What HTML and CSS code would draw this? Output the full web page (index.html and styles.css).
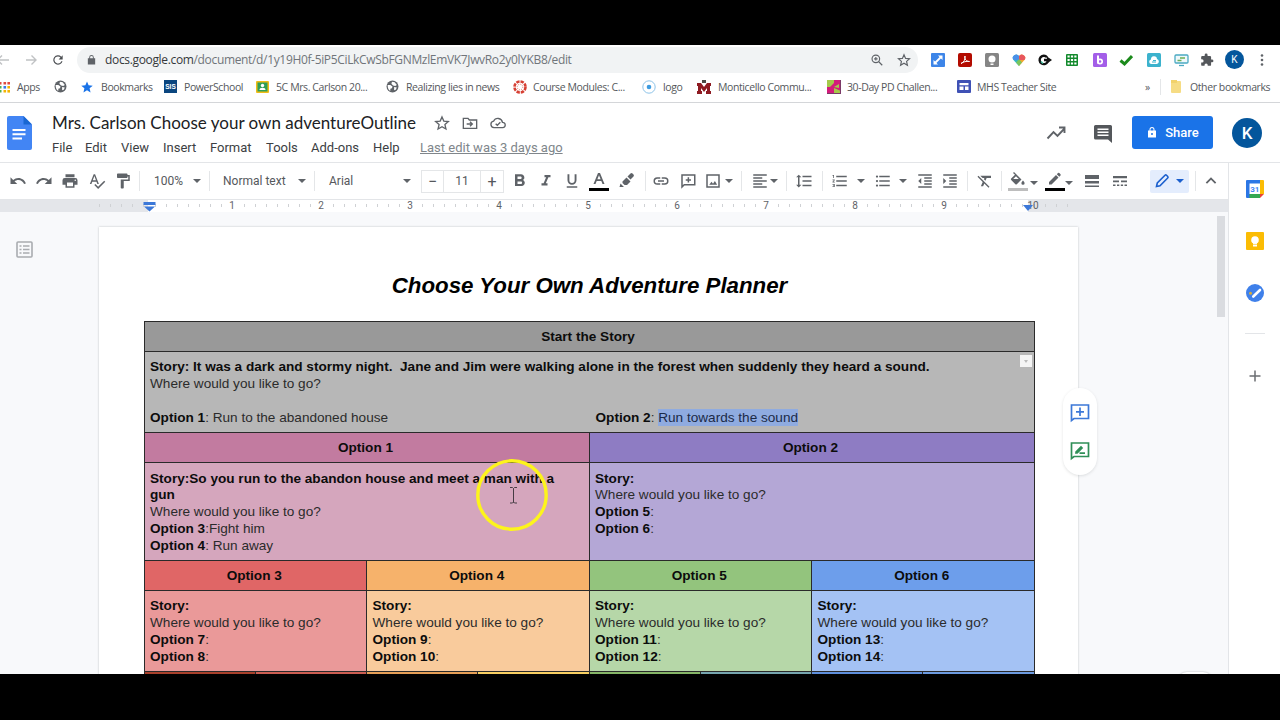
FILE: index.html
```
<!DOCTYPE html>
<html lang="en">
<head>
  <meta charset="UTF-8">
  <meta name="viewport" content="width=device-width, initial-scale=1.0">
  <title>Mrs. Carlson Choose your own adventureOutline</title>
  <link rel="stylesheet" href="styles.css">
</head>
<body>

<svg class="defs" width="0" height="0">
  <symbol id="caret" viewBox="0 0 8 4"><path d="M0 0h8L4 4z"/></symbol>
  <symbol id="globe" viewBox="0 0 24 24"><circle cx="12" cy="12" r="11"/><path fill="#fff" d="M3 9l5 0 4 3-1 3-3 1 0 4C5 19 3 15 3 9zM11 3l5 1 4 5-3 2-4-1-3-3zM15 13l5 1-2 4-3 1z"/></symbol>
</svg>

<div class="screen">
  <!-- Browser -->
  <div class="urlbar">
    <svg width="10" height="14" viewBox="0 0 10 14" fill="none" stroke="#c0c2c4" stroke-width="1.4"><path d="M0 7h9M2 2.500L-2.500 7 2 11.500"/></svg>
    <svg width="14" height="14" viewBox="0 0 14 14" fill="none" stroke="#c0c2c4" stroke-width="1.4"><path d="M2 7h10M7.500 2.500L12 7l-4.500 4.500"/></svg>
    <svg width="14" height="14" viewBox="0 0 24 24" fill="#4a4d51"><path d="M17.650 6.350A8 8 0 1 0 19.730 14h-2.080A6 6 0 1 1 12 6c1.660 0 3.140.690 4.220 1.780L13 11h7V4z"/></svg>
    <div class="omnibox">
      <svg width="11" height="12" viewBox="0 0 24 24" fill="#5f6368"><path d="M18 8h-1V6A5 5 0 0 0 7 6v2H4v14h16V8zM9 6a3 3 0 0 1 6 0v2H9z"/></svg>
      <span class="url"><b>docs.google.com</b>/document/d/1y19H0f-5iP5CiLkCwSbFGNMzlEmVK7JwvRo2y0lYKB8/edit</span>
      <svg class="zoom" width="14" height="14" viewBox="0 0 24 24" fill="none" stroke="#5f6368" stroke-width="2"><circle cx="10" cy="10" r="6.500"/><path d="M15 15l6 6M7 10h6M10 7v6"/></svg>
      <svg width="14" height="14" viewBox="0 0 24 24" fill="none" stroke="#5f6368" stroke-width="2"><path d="M12 3l2.700 6.200 6.800.6-5.100 4.500 1.500 6.700-5.900-3.500L6.100 21l1.500-6.700-5.100-4.500 6.800-.6z"/></svg>
    </div>
    <svg width="14" height="14" viewBox="0 0 14 14"><rect width="14" height="14" rx="1" fill="#3d85e8"/><path d="M3.500 10.500l7-7" stroke="#fff" stroke-width="1.800"/><path d="M7 2.500h4.500V7zM2.500 7v4.500H7z" fill="#fff"/></svg>
    <svg width="14" height="14" viewBox="0 0 14 14"><rect width="14" height="14" rx="2" fill="#b30b00"/><path d="M3 10.500c3-1 4.500-4.500 4-7.500-1 3 1.500 5.500 4.500 5.500C8 8 5.500 8.800 3 10.500z" fill="none" stroke="#fff"/></svg>
    <svg width="14" height="14" viewBox="0 0 14 14"><rect width="14" height="14" rx="1.500" fill="#858585"/><circle cx="7" cy="6" r="3.500" fill="#fff"/><path d="M5.500 10.500h3v1.500h-3z" fill="#fff"/></svg>
    <svg width="14" height="14" viewBox="0 0 14 14"><path d="M7 13L1.500 7A3.300 3.300 0 0 1 7 3z" fill="#35b6c6"/><path d="M7 13l5.500-6A3.300 3.300 0 0 0 7 3z" fill="#f3a52f"/><path d="M1.500 7A3.300 3.300 0 0 1 7 3v4z" fill="#4a90e8"/><path d="M7 3a3.300 3.300 0 0 1 5.500 4L7 7z" fill="#e8565d"/><path d="M4 9.500L7 6l3 3.500L7 13z" fill="#7cc55c"/></svg>
    <svg width="15" height="14" viewBox="0 0 15 14"><path d="M9 4.200A4.200 4.200 0 1 0 9.500 9V7H6" fill="none" stroke="#111" stroke-width="2.400"/><path d="M9 3.500L14 7l-5 3.500z" fill="#111"/><path d="M3 8.500l2 2" stroke="#49c7a5" stroke-width="1.500"/></svg>
    <svg width="14" height="14" viewBox="0 0 14 14"><rect x="1" y="1" width="12" height="12" rx="1" fill="#138a2d"/><path d="M2.500 3.500h9M2.500 7h9M2.500 10.500h9" stroke="#fff" stroke-width="2" stroke-dasharray="2.200 1.200"/></svg>
    <svg width="14" height="14" viewBox="0 0 14 14"><rect width="14" height="14" rx="1.500" fill="#a35ee8"/><path d="M5 2.500v8" stroke="#fff" stroke-width="2"/><circle cx="7" cy="8.500" r="2.200" fill="none" stroke="#fff" stroke-width="1.700"/></svg>
    <svg width="14" height="14" viewBox="0 0 14 14"><path d="M1.500 7.500l4 3.500L13 3" fill="none" stroke="#1b8a1b" stroke-width="3"/></svg>
    <svg width="14" height="14" viewBox="0 0 14 14"><rect width="14" height="14" rx="1.500" fill="#3cb2cd"/><path d="M4 11a2.300 2.300 0 0 1 0-4.500 3 3 0 0 1 6-.5 2.600 2.600 0 0 1 0 5z" fill="#fff"/><path d="M5 9h4M6 7.500h3" stroke="#3cb2cd"/></svg>
    <svg width="15" height="14" viewBox="0 0 15 14"><rect x="1" y="2" width="13" height="8" rx="1" fill="#eef8fb" stroke="#4aa9c2" stroke-width="1.300"/><path d="M3.500 7.500h4M6 5h5" stroke="#6cae56" stroke-width="1.300"/><path d="M5 12.500h5" stroke="#4aa9c2" stroke-width="1.300"/></svg>
    <svg width="14" height="14" viewBox="0 0 24 24" fill="#54575b"><path d="M20.500 11H19V7a2 2 0 0 0-2-2h-4V3.500a2.500 2.500 0 0 0-5 0V5H4a2 2 0 0 0-2 2v3.800h1.500a2.700 2.700 0 0 1 0 5.400H2V20a2 2 0 0 0 2 2h3.800v-1.500a2.700 2.700 0 0 1 5.400 0V22H17a2 2 0 0 0 2-2v-4h1.500a2.500 2.500 0 0 0 0-5z"/></svg>
    <span class="avatar avatar-small">K</span>
    <svg width="14" height="14" viewBox="0 0 14 14" fill="#5f6368"><circle cx="7" cy="2.500" r="1.300"/><circle cx="7" cy="7" r="1.300"/><circle cx="7" cy="11.500" r="1.300"/></svg>
  </div>

  <div class="bookmarks">
    <svg width="10" height="12" viewBox="0 0 10 12"><g fill="#e04a3f"><path d="M0 1h1.500v2.600H0zM3.500 1h2.600v2.600H3.500zM7.400 1H10v2.600H7.400z"/></g><path fill="#4caf50" d="M0 5h1.500v2.600H0z"/><path fill="#3b78e7" d="M3.500 5h2.600v2.600H3.500z"/><path fill="#f4b400" d="M7.400 5H10v2.600H7.400zM3.500 9h2.600v2.600H3.500z"/><path fill="#4caf50" d="M0 9h1.500v2.600H0z"/><path fill="#f4b400" d="M7.400 9H10v2.600H7.400z"/></svg>
    <span>Apps</span>
    <svg width="13" height="13" fill="#5f6368"><use href="#globe"/></svg>
    <svg width="12" height="12" viewBox="0 0 24 24" fill="#1a73e8"><path d="M12 1l3.200 7.600 8.300.7-6.300 5.400 1.900 8.100L12 18.500l-7.100 4.300 1.900-8.100L.5 9.300l8.300-.7z"/></svg>
    <span>Bookmarks</span>
    <span class="sis">SIS</span>
    <span>PowerSchool</span>
    <svg width="13" height="12" viewBox="0 0 13 12"><rect width="13" height="12" rx="1" fill="#f0bd18"/><rect x="1.500" y="1.500" width="10" height="9" fill="#2f9e56"/><circle cx="6.500" cy="4.500" r="1.700" fill="#fff"/><path d="M3.500 9a3 2.300 0 0 1 6 0z" fill="#fff"/></svg>
    <span>5C Mrs. Carlson 20...</span>
    <svg width="13" height="13" fill="#5f6368"><use href="#globe"/></svg>
    <span>Realizing lies in news</span>
    <svg width="14" height="14" viewBox="0 0 14 14" fill="none" stroke="#d64034"><circle cx="7" cy="7" r="5.500" stroke-width="2.600" stroke-dasharray="3.300 1"/><circle cx="7" cy="7" r="2.800" stroke-width=".7" stroke-dasharray="1 1.200"/></svg>
    <span>Course Modules: C...</span>
    <svg width="14" height="14" viewBox="0 0 14 14"><circle cx="7" cy="7" r="6.200" fill="none" stroke="#8cc3e8"/><circle cx="7" cy="7" r="2.300" fill="#3c9be0"/></svg>
    <span>logo</span>
    <svg width="14" height="14" viewBox="0 0 14 14"><path d="M0 3h4l3 4 3-4h4v3h-1v5h1v3H9v-3h1V8l-3 4-3-4v3h1v3H0v-3h1V6H0z" fill="#8e1b22"/><path d="M5 0h4v3H5z" fill="#4b4a45"/></svg>
    <span>Monticello Commu...</span>
    <svg width="14" height="14" viewBox="0 0 14 14"><rect width="14" height="14" fill="#d31b7b"/><path d="M0 0h7v3L3 7H0zM7 14V8l7 3v3zM7 7l5-3v4z" fill="#a5c94a"/><path d="M0 13.500h14M13.500 0v14" stroke="#7b3a68"/></svg>
    <span>30-Day PD Challen...</span>
    <svg width="14" height="13" viewBox="0 0 14 13"><rect width="14" height="13" rx="1" fill="#3f51b5"/><path d="M2.500 3h9v2.200h-9zM2.500 6.500h4V10h-4zM8 6.500h3.500V10H8z" fill="#fff"/></svg>
    <span>MHS Teacher Site</span>
    <span class="more">»</span>
    <i class="sep"></i>
    <svg width="12" height="13" viewBox="0 0 12 13"><rect x="1" y="1" width="10" height="12" rx="1" fill="#f6dc84"/><path d="M1 0h6v3H1z" fill="#f2d26b"/></svg>
    <span>Other bookmarks</span>
  </div>

  <!-- Docs header -->
  <div class="header">
    <svg class="logo" width="25" height="34" viewBox="0 0 25 34"><path d="M2 0h14.500L25 8.500V32a2 2 0 0 1-2 2H2a2 2 0 0 1-2-2V2a2 2 0 0 1 2-2z" fill="#4285f4"/><path d="M16.500 0L25 8.500h-8.500z" fill="#1967d2"/><path d="M5.500 14h13M5.500 18.200h13M5.500 22.500h9.500" stroke="#fff" stroke-width="1.900"/></svg>
    <div class="doc">
      <div class="titlerow">
        <span class="title">Mrs. Carlson Choose your own adventureOutline</span>
        <svg width="16" height="16" viewBox="0 0 24 24" fill="none" stroke="#5f6368" stroke-width="2"><path d="M12 3l2.700 6.200 6.800.6-5.100 4.500 1.500 6.700-5.900-3.500L6.100 21l1.500-6.700-5.100-4.500 6.800-.6z"/></svg>
        <svg width="16" height="16" viewBox="0 0 24 24" fill="none" stroke="#5f6368" stroke-width="2"><path d="M2 5h7l2 2.500h11V20H2zM7 13.500h8M12 10l3.500 3.500L12 17"/></svg>
        <svg width="16" height="16" viewBox="0 0 24 24" fill="none" stroke="#5f6368" stroke-width="2"><path d="M6 19a5 5 0 0 1-.5-9.900A7 7 0 0 1 18.700 11 4 4 0 0 1 19 19zM8.500 13l2.500 2.500 4.500-4.500"/></svg>
      </div>
      <div class="menus">
        <span>File</span><span>Edit</span><span>View</span><span>Insert</span><span>Format</span><span>Tools</span><span>Add-ons</span><span>Help</span><span class="last">Last edit was 3 days ago</span>
      </div>
    </div>
    <svg width="20" height="20" viewBox="0 0 20 20" fill="none" stroke="#5f6368" stroke-width="1.900"><path d="M1.500 15.500l6-6.500 4 4 7-7.500M13 4.500h5.500V10"/></svg>
    <svg class="history" width="18" height="18" viewBox="0 0 18 18"><path d="M1.500 0h15A1.500 1.500 0 0 1 18 1.500V18l-4-3.500H1.500A1.500 1.500 0 0 1 0 13V1.500A1.500 1.500 0 0 1 1.500 0z" fill="#54575b"/><path d="M3.500 4.300h11M3.500 7.300h11M3.500 10.300h11" stroke="#fff" stroke-width="1.500"/></svg>
    <div class="share">
      <svg width="12" height="13" viewBox="0 0 24 24" fill="#fff"><path d="M18 8h-1V6A5 5 0 0 0 7 6v2H4v14h16V8zM9 6a3 3 0 0 1 6 0v2H9zm3 11a2 2 0 1 1 0-4 2 2 0 0 1 0 4z" fill-rule="evenodd"/></svg>
      <span>Share</span>
    </div>
    <span class="avatar avatar-big">K</span>
  </div>

  <div class="workspace">
    <div class="editor">
      <div class="toolbar">
        <svg width="18" height="18" viewBox="0 0 24 24"><path d="M12.500 8c-2.650 0-5.050 1-6.900 2.600L2 7v9h9l-3.620-3.620c1.390-1.160 3.160-1.880 5.120-1.880 3.540 0 6.550 2.310 7.600 5.500l2.370-.780C21.080 11.030 17.150 8 12.500 8z"/></svg>
        <svg width="18" height="18" viewBox="0 0 24 24"><path d="M18.400 10.600C16.550 9 14.150 8 11.500 8c-4.650 0-8.580 3.030-9.960 7.220L3.900 16c1.050-3.190 4.050-5.500 7.600-5.500 1.950 0 3.730.720 5.120 1.880L13 16h9V7z"/></svg>
        <svg width="18" height="18" viewBox="0 0 24 24"><path fill-rule="evenodd" d="M19 8H5a3 3 0 0 0-3 3v6h4v4h12v-4h4v-6a3 3 0 0 0-3-3zm-3 11H8v-5h8zm3-7a1 1 0 1 1 0-2 1 1 0 0 1 0 2zM18 3H6v4h12z"/></svg>
        <svg width="18" height="18" viewBox="0 0 24 24"><path d="M12.450 16h2.090L9.430 3H7.570L2.460 16h2.090l1.120-3h5.640zm-6.020-5L8.500 5.480 10.570 11zm15.160.590l-8.090 8.090L9.830 16l-1.410 1.410 5.090 5.090L23 13z"/></svg>
        <svg width="18" height="18" viewBox="0 0 24 24"><path d="M18 4V3c0-.550-.450-1-1-1H5c-.550 0-1 .450-1 1v4c0 .550.450 1 1 1h12c.550 0 1-.450 1-1V6h1v4H9v11c0 .550.450 1 1 1h2c.550 0 1-.450 1-1v-9h8V4z"/></svg>
        <i class="sep"></i>
        <span>100%</span>
        <svg width="8" height="4"><use href="#caret"/></svg>
        <i class="sep"></i>
        <span>Normal text</span>
        <svg width="8" height="4"><use href="#caret"/></svg>
        <i class="sep"></i>
        <span>Arial</span>
        <svg width="8" height="4"><use href="#caret"/></svg>
        <div class="fontsize"><span>−</span><b>11</b><span>+</span></div>
        <svg width="20" height="20" viewBox="0 0 24 24"><path d="M15.600 10.790c.970-.670 1.650-1.770 1.650-2.790 0-2.260-1.750-4-4-4H6v14h8.040c2.090 0 3.710-1.700 3.710-3.790 0-1.520-.860-2.820-2.150-3.420zM9 6.500h3.500c.830 0 1.500.670 1.500 1.500s-.670 1.500-1.500 1.500H9v-3zm4 9H9v-3h4c.830 0 1.500.670 1.500 1.500s-.670 1.500-1.500 1.500z" fill-rule="evenodd"/></svg>
        <svg width="18" height="18" viewBox="0 0 24 24"><path d="M10 4v3h2.210l-3.420 8H6v3h8v-3h-2.210l3.420-8H18V4z"/></svg>
        <svg width="18" height="18" viewBox="0 0 24 24"><path d="M12 17c3.310 0 6-2.690 6-6V3h-2.500v8a3.500 3.500 0 0 1-7 0V3H6v8c0 3.310 2.690 6 6 6zm-7 2v2h14v-2z"/></svg>
        <svg class="color" width="20" height="20" viewBox="0 0 20 20"><path d="M9 2h2l4.500 11h-2l-1.200-3H7.700l-1.200 3h-2zM8.400 8.300h3.200L10 4.200z" fill-rule="evenodd"/><path d="M0 17h20v3H0z" fill="#000"/></svg>
        <svg width="18" height="18" viewBox="0 0 18 18"><path d="M2.500 11.500l3.500 3.500H1.500zM4.500 9.500l4-4 4 4-3.500 3.500H6.500l-2-2zM9.500 4.500l3-3a1.500 1.500 0 0 1 2 0l1 1a1.500 1.500 0 0 1 0 2l-3 3z"/></svg>
        <i class="sep"></i>
        <svg width="18" height="18" viewBox="0 0 24 24"><path d="M3.900 12c0-1.710 1.390-3.100 3.100-3.100h4V7H7a5 5 0 0 0 0 10h4v-1.900H7c-1.710 0-3.100-1.390-3.100-3.100zM8 13h8v-2H8zm9-6h-4v1.900h4a3.100 3.100 0 0 1 0 6.200h-4V17h4a5 5 0 0 0 0-10z"/></svg>
        <svg width="18" height="18" viewBox="0 0 24 24" fill="none" stroke="#5f6368" stroke-width="2"><path d="M4 20V4h17v13H7zM12.500 7v7M9 10.500h7"/></svg>
        <svg width="18" height="18" viewBox="0 0 24 24"><path fill="none" stroke="#5f6368" stroke-width="2" d="M4 4h16v16H4z"/><path d="M7 17l3-4 2 2.500 2.500-3.500L17.500 17z"/></svg>
        <svg width="8" height="4"><use href="#caret"/></svg>
        <i class="sep"></i>
        <svg width="18" height="18" viewBox="0 0 24 24"><path d="M15 15H3v2h12zm0-8H3v2h12zM3 13h18v-2H3zm0 8h18v-2H3zM3 3v2h18V3z"/></svg>
        <svg width="8" height="4"><use href="#caret"/></svg>
        <i class="sep"></i>
        <svg width="18" height="18" viewBox="0 0 24 24"><path d="M6 7h2.500L5 3.500 1.500 7H4v10H1.500L5 20.500 8.500 17H6zm4-2v2h12V5zm0 14h12v-2H10zm0-6h12v-2H10z"/></svg>
        <i class="sep"></i>
        <svg width="18" height="18" viewBox="0 0 24 24"><path d="M2 17h2v.5H3v1h1v.5H2v1h3v-4H2zm1-9h1V4H2v1h1zm-1 3h1.800L2 13.100v.9h3v-1H3.200L5 10.900V10H2zm5-6v2h14V5zm0 14h14v-2H7zm0-6h14v-2H7z"/></svg>
        <svg width="8" height="4"><use href="#caret"/></svg>
        <svg width="18" height="18" viewBox="0 0 24 24"><path d="M4 10.500a1.500 1.500 0 1 0 0 3 1.500 1.500 0 0 0 0-3zm0-6a1.500 1.500 0 1 0 0 3 1.500 1.500 0 0 0 0-3zm0 12a1.500 1.500 0 1 0 0 3 1.500 1.500 0 0 0 0-3zM7 19h14v-2H7zm0-6h14v-2H7zm0-8v2h14V5z"/></svg>
        <svg width="8" height="4"><use href="#caret"/></svg>
        <svg width="18" height="18" viewBox="0 0 24 24"><path d="M11 17h10v-2H11zm-8-5l4 4V8zm0 9h18v-2H3zM3 3v2h18V3zm8 6h10V7H11zm0 4h10v-2H11z"/></svg>
        <svg width="18" height="18" viewBox="0 0 24 24"><path d="M3 21h18v-2H3zM3 8v8l4-4zm8 9h10v-2H11zM3 3v2h18V3zm8 6h10V7H11zm0 4h10v-2H11z"/></svg>
        <i class="sep"></i>
        <svg width="18" height="18" viewBox="0 0 24 24"><path d="M3.270 5L2 6.270l6.970 6.970L6.500 19h3l1.570-3.660L16.730 21 18 19.730 3.550 5.270zM6 5v.180L8.820 8h2.400l-.720 1.680 2.100 2.100L14.210 8H20V5z"/></svg>
        <i class="sep"></i>
        <svg class="color" width="20" height="20" viewBox="0 0 20 20"><path d="M6 1l7.500 7.500-4.700 4.700a1 1 0 0 1-1.400 0L3.200 9a1 1 0 0 1 0-1.400L7 3.800 5 1.900zM8 5.200L5.200 8h5.600z" fill-rule="evenodd"/><path d="M15 9.500s1.600 1.700 1.600 2.700a1.600 1.600 0 0 1-3.200 0c0-1 1.600-2.700 1.600-2.700z"/><path d="M0 17h20v3H0z" fill="#bdbdbd"/></svg>
        <svg width="8" height="4" class="low"><use href="#caret"/></svg>
        <svg class="color" width="20" height="20" viewBox="0 0 20 20"><path d="M4 11l7-7 2.500 2.500-7 7H4zM11.800 3.200l1.200-1.200a1 1 0 0 1 1.300 0l1.200 1.200a1 1 0 0 1 0 1.300l-1.200 1.200z"/><path d="M0 17h20v3H0z" fill="#000"/></svg>
        <svg width="8" height="4" class="low"><use href="#caret"/></svg>
        <svg width="18" height="18" viewBox="0 0 18 18"><path d="M2 3h14v4H2zM2 9h14v2.500H2zM2 13.500h14V15H2z"/></svg>
        <svg width="18" height="18" viewBox="0 0 18 18"><path d="M2 4h14v2.300H2zM2 8.500h6v1.700H2zM10 8.500h6v1.700h-6zM2 12.500h2.500V14H2zM6 12.500h2.300V14H6zM9.800 12.500h2.300V14H9.800zM13.500 12.500H16V14h-2.500z"/></svg>
        <div class="mode">
          <svg width="16" height="16" viewBox="0 0 16 16" fill="none" stroke="#1a5fce" stroke-width="1.600"><path d="M2.500 13.500l.8-3.500L11 2.300c.5-.5 1-.5 1.500 0l1.200 1.200c.5.500.5 1 0 1.500L6 12.700z"/></svg>
          <svg width="8" height="4"><use href="#caret"/></svg>
        </div>
        <i class="sep"></i>
        <svg width="18" height="18" viewBox="0 0 24 24"><path d="M12 7l-7 7 1.700 1.700L12 10.400l5.300 5.300L19 14z"/></svg>
      </div>

      <div class="ruler">
        <div class="inch first"><svg width="13" height="11" viewBox="0 0 13 11" fill="#3c78d8"><path d="M.5 1h12v3H.5zM1 5.500h11L6.500 10.500z"/></svg></div>
        <div class="inch"><span>1</span></div><div class="inch"><span>2</span></div><div class="inch"><span>3</span></div><div class="inch"><span>4</span></div><div class="inch"><span>5</span></div><div class="inch"><span>6</span></div><div class="inch"><span>7</span></div><div class="inch"><span>8</span></div><div class="inch"><span>9</span></div>
        <div class="inch final"><span>10</span><svg width="10" height="6" viewBox="0 0 10 6" fill="#3c78d8"><path d="M0 0h10L5 6z"/></svg></div>
      </div>

      <div class="canvas">
        <svg class="outline" width="17" height="17" viewBox="0 0 17 17" fill="none" stroke="#a9acb0" stroke-width="1.600"><rect x="1" y="1" width="15" height="15" rx="1"/><path d="M3.500 5h2M7 5h6.500M3.500 8.500h2M7 8.500h6.500M3.500 12h2M7 12h6.500" stroke-width="1.400"/></svg>
        <div class="page">
          <h1>Choose Your Own Adventure Planner</h1>
          <div class="planner">
            <div class="cell w8 head c-gray">Start the Story</div>
            <div class="cell w8 start c-gray-l">
              <b>Story: It was a dark and stormy night.&nbsp; Jane and Jim were walking alone in the forest when suddenly they heard a sound.</b><br>
              Where would you like to go?<br><br>
              <div class="choices"><span><b>Option 1</b>: Run to the abandoned house</span><span><b>Option 2</b>: <mark>Run towards the sound</mark></span></div>
              <i class="cellmenu"></i>
            </div>

            <div class="cell w4 head c-pink">Option 1</div>
            <div class="cell w4 head c-purple">Option 2</div>
            <div class="cell w4 tall c-pink-l"><b>Story:So you run to the abandon house and meet a man with a<br>gun</b><br>Where would you like to go?<br><b>Option 3</b>:Fight him<br><b>Option 4</b>: Run away</div>
            <div class="cell w4 tall c-purple-l"><b>Story:</b><br>Where would you like to go?<br><b>Option 5</b>:<br><b>Option 6</b>:</div>

            <div class="cell w2 head c-red">Option 3</div>
            <div class="cell w2 head c-orange">Option 4</div>
            <div class="cell w2 head c-green">Option 5</div>
            <div class="cell w2 head c-blue">Option 6</div>
            <div class="cell w2 c-red-l"><b>Story:</b><br>Where would you like to go?<br><b>Option 7</b>:<br><b>Option 8</b>:</div>
            <div class="cell w2 c-orange-l"><b>Story:</b><br>Where would you like to go?<br><b>Option 9</b>:<br><b>Option 10</b>:</div>
            <div class="cell w2 c-green-l"><b>Story:</b><br>Where would you like to go?<br><b>Option 11</b>:<br><b>Option 12</b>:</div>
            <div class="cell w2 c-blue-l"><b>Story:</b><br>Where would you like to go?<br><b>Option 13</b>:<br><b>Option 14</b>:</div>

            <div class="cell c-n1"></div><div class="cell c-n2"></div><div class="cell c-n3"></div><div class="cell c-n4"></div>
            <div class="cell c-n5"></div><div class="cell c-n6"></div><div class="cell c-n7"></div><div class="cell c-n8"></div>
          </div>
        </div>
        <div class="scrollbar"></div>
        <div class="float">
          <svg width="20" height="20" viewBox="0 0 20 20" fill="none" stroke="#3c78d8" stroke-width="1.700"><path d="M1.500 17.500V2h17v13.500H4zM10 4.500v8.500M6 8.800h8"/></svg>
          <svg width="20" height="20" viewBox="0 0 20 20" fill="none" stroke="#2f8f57" stroke-width="1.700"><path d="M1.500 17.500V2h17v13.500H4zM9.500 12.200H15"/><path d="M5 12.700l.3-2.200L11 4.800l2.200 2.200-5.700 5.700z" fill="#2f8f57" stroke="none"/></svg>
        </div>
        <div class="explore"></div>
      </div>
    </div>

    <div class="sidepanel">
      <svg width="18" height="18" viewBox="0 0 18 18"><path d="M1 0h13v4H4v14H1a1 1 0 0 1-1-1V1a1 1 0 0 1 1-1z" fill="#2b76e5"/><path d="M14 0h3a1 1 0 0 1 1 1v13h-4z" fill="#fbbc04"/><path d="M3.500 14H14v4H3.500z" fill="#34a853"/><path d="M14 14h4l-4 4z" fill="#ea4335"/><path d="M3.500 3.500H14V14H3.500z" fill="#fff"/><text x="8.800" y="11.700" font-size="8" font-weight="bold" text-anchor="middle" fill="#4285f4">31</text></svg>
      <svg width="18" height="18" viewBox="0 0 18 18"><rect width="18" height="18" rx="1" fill="#fbbc04"/><circle cx="9" cy="8" r="3.800" fill="#fff"/><path d="M7 11h4v3.500H7z" fill="#fff"/><path d="M7 12.400h4" stroke="#fbbc04" stroke-width=".6"/></svg>
      <svg width="18" height="18" viewBox="0 0 18 18"><circle cx="9" cy="9" r="9" fill="#3f80ea"/><path d="M7.300 12.500L14 6" stroke="#fff" stroke-width="2.600" stroke-linecap="round"/><circle cx="4.500" cy="9.300" r="1.500" fill="#d5ab3c"/></svg>
      <i class="rule"></i>
      <svg class="plus" width="12" height="12" viewBox="0 0 12 12"><path d="M6 .5v11M.5 6h11" stroke="#6b6e72" stroke-width="1.500"/></svg>
    </div>
  </div>

  <!-- Mouse pointer with highlight ring -->
  <svg class="pointer" width="74" height="74" viewBox="0 0 74 74"><circle cx="37" cy="37" r="34.200" fill="none" stroke="#fdf41c" stroke-width="3.400"/><path d="M35 29.500h2.500l1 1 1-1H42M38.500 30.500v14M35 45h2.500l1-1 1 1H42" fill="none" stroke="#463c44"/></svg>
</div>

</body>
</html>
```
FILE: styles.css
```
body {
  margin: 0;
  background: #000;
  font-family: Roboto, "Liberation Sans", sans-serif;
  color: #3c4043;
}
.defs {
  display: block;
}
svg {
  display: block;
}
.screen {
  position: relative;
  display: flex;
  flex-direction: column;
  width: 1280px;
  height: 629px;
  margin: 45px 0 46px;
  overflow: hidden;
  background: #fff;
}
.sep {
  width: 1px;
  height: 20px;
  background: #e4e6e8;
}

/* Browser */
.urlbar {
  display: grid;
  grid-template-columns: 24px 27px 26px 854px 27px 27px 27px 26px 27px 28px 26px 28px 27px 26px 25px 30px 14px;
  align-items: center;
  height: 29px;
  flex: none;
}
.omnibox {
  display: flex;
  align-items: center;
  box-sizing: border-box;
  width: 841px;
  height: 26px;
  padding: 0 7px 0 9px;
  border-radius: 13px;
  background: #f1f3f4;
}
.url {
  margin-left: 8px;
  font: 12px "Open Sans", sans-serif;
  letter-spacing: -.340px;
  color: #70757a;
  white-space: nowrap;
}
.url b {
  font-weight: normal;
  color: #35383b;
}
.zoom {
  margin-left: auto;
  margin-right: 13px;
}
.avatar {
  display: flex;
  align-items: center;
  justify-content: center;
  border-radius: 50%;
  background: #04569c;
  color: #fff;
}
.avatar-small {
  width: 19px;
  height: 19px;
  font-size: 10px;
}
.avatar-big {
  width: 30px;
  height: 30px;
  font-size: 17px;
  font-weight: 500;
}
.bookmarks {
  display: grid;
  grid-template-columns: 17px 37px 27px 20px 63px 20px 72px 20px 110px 20px 107px 20px 109px 21px 34px 21px 109px 20px 110px 20px 168px 15px 10px 20px 90px;
  align-items: center;
  height: 25px;
  padding-bottom: 3px;
  border-bottom: 1px solid #d4d6d9;
  flex: none;
  font: 10.500px "Open Sans", sans-serif;
  letter-spacing: -.400px;
  color: #55585c;
  white-space: nowrap;
}
.bookmarks .sep {
  height: 16px;
}
.bookmarks .sis {
  width: 13px;
  height: 13px;
  background: #0b467f;
  color: #fff;
  font: bold 6.500px/13px "Liberation Sans", sans-serif;
  letter-spacing: 0;
  text-align: center;
}

/* Docs header */
.header {
  display: flex;
  align-items: center;
  height: 59px;
  padding: 0 18px 0 7px;
  border-bottom: 1px solid #e3e5e8;
  flex: none;
}
.doc {
  align-self: flex-start;
  flex: 1;
  margin-left: 20px;
  padding-top: 8px;
}
.titlerow {
  display: grid;
  grid-template-columns: 382px 28px 28px 20px;
  align-items: center;
  height: 23px;
}
.title {
  font: 17px Lato, sans-serif;
  color: #202124;
  white-space: nowrap;
}
.menus {
  display: grid;
  grid-template-columns: 33px 36px 42px 47px 56px 45px 62px 47px 150px;
  align-items: center;
  height: 26px;
  font-size: 13px;
  white-space: nowrap;
}
.last {
  color: #80868b;
  text-decoration: underline;
}
.history {
  margin: 2px 20px 0 28px;
}
.share {
  display: flex;
  align-items: center;
  justify-content: center;
  gap: 7px;
  width: 81px;
  height: 33px;
  margin-right: 19px;
  border-radius: 3px;
  background: #1a73e8;
  color: #fff;
  font-size: 13px;
  font-weight: 500;
}

.workspace {
  display: flex;
  flex: 1;
  min-height: 0;
}
.editor {
  display: flex;
  flex-direction: column;
  width: 1228px;
}
.toolbar {
  display: grid;
  grid-template-columns: 26px 26px 27px 26px 25px 15px 39px 16px 14px 75px 16px 15px 74px 18px 89px 27px 26px 27px 28px 27px 7px 27px 25px 21px 16px 10px 19px 16px 9px 27px 9px 26px 17px 25px 17px 25px 26px 9px 25px 8px 21px 16px 19px 18px 28px 39px 45px 7px 18px;
  align-items: center;
  height: 36px;
  padding-left: 9px;
  fill: #5f6368;
  font-size: 12px;
  color: #55585c;
  white-space: nowrap;
}
.toolbar .color {
  margin-left: -1px;
}
.low {
  margin-top: 4px;
}
.fontsize {
  display: grid;
  grid-template-columns: 21px 38px 22px;
  width: 81px;
  height: 21px;
  border: 1px solid #e4e6e8;
  line-height: 21px;
  text-align: center;
}
.fontsize span {
  font-size: 16px;
}
.fontsize b {
  font-weight: normal;
  border-left: 1px solid #e4e6e8;
  border-right: 1px solid #e4e6e8;
}
.mode {
  display: flex;
  align-items: center;
  gap: 6px;
  width: 33px;
  height: 23px;
  padding: 0 2px 0 4px;
  border-radius: 2px;
  background: #e4edfd;
}
.mode svg:last-child {
  fill: #1a5fce;
}

.ruler {
  display: flex;
  height: 12px;
  padding-left: 98.500px;
  border-top: 1px solid #e3e5e8;
  background: linear-gradient(90deg, #e4e6ea 148px, #fff 148px, #fff 1028px, #e4e6ea 1028px);
  flex: none;
}
/* one inch, centred on its number, with eighth-inch ticks */
.inch {
  display: flex;
  align-items: center;
  justify-content: center;
  width: 89px;
  height: 12px;
  background: repeating-linear-gradient(90deg, #cfd1d4 0, #cfd1d4 1px, transparent 1px, transparent 11.125px) 0 4px / 100% 3px no-repeat;
  font-size: 10px;
  line-height: 12px;
  color: #5f6368;
}
.inch span {
  padding: 0 5px;
  background: #fff;
}
.inch.first svg {
  margin-left: 12px;
}
.inch.final {
  position: relative;
}
.inch.final span {
  padding: 0;
  background: none;
}
.inch.final svg {
  position: absolute;
  left: 34px;
  top: 5px;
}

.canvas {
  position: relative;
  display: flex;
  flex: 1;
  min-height: 0;
  overflow: hidden;
  background: #f8f9fb;
}
.outline {
  margin: 29px 0 0 16px;
}
.page {
  width: 890px;
  height: 600px;
  margin: 15px 0 0 66px;
  padding: 0 44px 0 45px;
  background: #fff;
  box-shadow: 0 0 2px rgba(60, 64, 67, .3);
  flex: none;
}
h1 {
  margin: 46px 0 22px;
  padding-left: 1px;
  font: italic bold 22.300px/26px "Liberation Sans", Arial, sans-serif;
  color: #000;
  text-align: center;
}
.planner {
  display: grid;
  grid-template-columns: repeat(8, 1fr);
  grid-template-rows: 30px 81px 30px 98px 30px 81px 30px;
  width: 890px;
  margin-left: -.500px;
  border-right: 1px solid #2a2a2a;
  font: 13.600px/16.850px "Liberation Sans", Arial, sans-serif;
  color: #2b2b2b;
}
.cell {
  padding: 7px 0 0 5.500px;
  border-left: 1px solid #2a2a2a;
  border-top: 1px solid #2a2a2a;
  white-space: nowrap;
}
.cell b {
  color: #0c0c0c;
}
.w8 {
  grid-column: span 8;
}
.w4 {
  grid-column: span 4;
}
.w2 {
  grid-column: span 2;
}
.head {
  padding-left: 0;
  padding-right: 2px;
  font-weight: bold;
  color: #0c0c0c;
  text-align: center;
}
.start {
  position: relative;
}
.tall {
  padding-top: 7.500px;
}
.choices {
  display: grid;
  grid-template-columns: 445.500px 1fr;
}
mark {
  padding: 1px 0;
  background: #8fabe0;
  color: #1b2a47;
}
.cellmenu {
  position: absolute;
  top: 3px;
  right: 2px;
  width: 12px;
  height: 12px;
  background: #f4f4f4;
}
.cellmenu::after {
  content: "";
  position: absolute;
  left: 4px;
  top: 5px;
  border: 2px solid transparent;
  border-top: 3px solid #bbb;
}
.c-gray { background: #999; }
.c-gray-l { background: #b7b7b7; }
.c-pink { background: #c27ba0; }
.c-pink-l { background: #d5a6bd; }
.c-purple { background: #8e7cc3; }
.c-purple-l { background: #b4a7d6; }
.c-red { background: #e06666; }
.c-red-l { background: #ea9999; }
.c-orange { background: #f6b26b; }
.c-orange-l { background: #f9cb9c; }
.c-green { background: #93c47d; }
.c-green-l { background: #b6d7a8; }
.c-blue { background: #6d9eeb; }
.c-blue-l { background: #a4c2f4; }
.c-n1 { background: #a9412c; }
.c-n2 { background: #cc5e52; }
.c-n3 { background: #e69f57; }
.c-n4 { background: #f7cf62; }
.c-n5 { background: #86b668; }
.c-n6 { background: #76a5af; }
.c-n7 { background: #5f8fdc; }
.c-n8 { background: #6d9be0; }

.scrollbar {
  width: 8px;
  height: 101px;
  margin: 4px 0 0 139px;
  background: #dadce0;
}
.float {
  position: absolute;
  left: 1063px;
  top: 176px;
  display: flex;
  flex-direction: column;
  align-items: center;
  justify-content: center;
  gap: 18px;
  width: 34px;
  height: 87px;
  border-radius: 17px;
  background: #fff;
  box-shadow: 0 1px 3px rgba(60, 64, 67, .15);
}
.explore {
  position: absolute;
  left: 1177px;
  bottom: -18px;
  width: 36px;
  height: 20px;
  border-radius: 10px;
  background: #fff;
  box-shadow: 0 0 2px rgba(60, 64, 67, .4);
}

.sidepanel {
  display: flex;
  flex-direction: column;
  align-items: center;
  gap: 34px;
  width: 51px;
  padding-top: 17px;
  border-left: 1px solid #e3e5e8;
}
.rule {
  width: 20px;
  height: 1px;
  margin-top: -3px;
  background: #e3e5e8;
}
.plus {
  margin-top: 2px;
}

.pointer {
  position: absolute;
  left: 475px;
  top: 413px;
}
```
